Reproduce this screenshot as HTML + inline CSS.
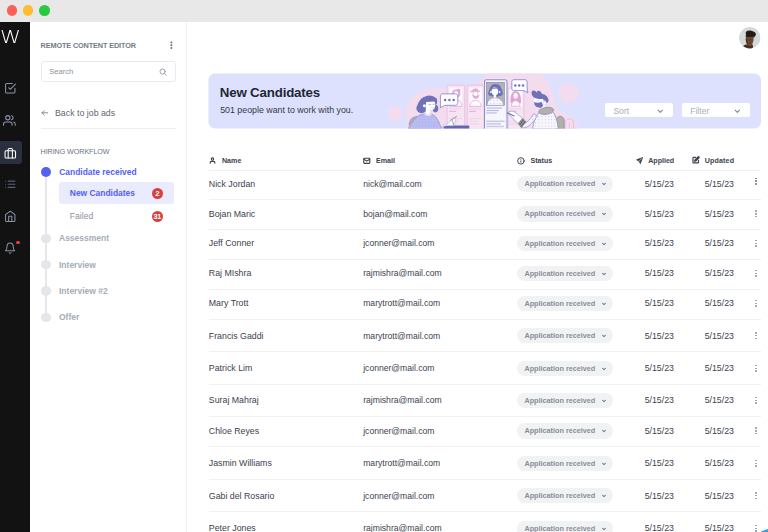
<!DOCTYPE html><html><head><meta charset="utf-8"><title>New Candidates</title><style>
*{box-sizing:border-box}
html,body{margin:0;padding:0}
body{width:768px;height:532px;position:relative;overflow:hidden;background:#fff;font-family:"Liberation Sans",sans-serif;color:#374151}
.a{position:absolute;white-space:nowrap;line-height:1}
.t{position:absolute;white-space:nowrap;line-height:12px;height:12px;margin-top:-6px}
.cell{font-size:8.8px;color:#3b4250}
.em{font-size:8.6px}
.hd{font-size:7.1px;font-weight:700;color:#3b4250}
.pill{position:absolute;left:517px;width:96px;height:15.5px;border-radius:8px;background:#f1f2f4}
.pt{font-size:7.25px;font-weight:700;color:#888e99;left:524.4px}
.ln{position:absolute;left:209px;width:552px;height:1px;background:#f0f1f3}
.step{font-size:8.5px;font-weight:700;color:#a6acb7;left:59px}
.dot{position:absolute;left:41.2px;width:9.6px;height:9.6px;border-radius:50%;background:#e4e6ea}
svg{position:absolute;overflow:visible}
</style></head><body>
<div class="a" style="left:0;top:0;width:768px;height:22.3px;background:#e8e8e8"></div>
<div class="a" style="left:6.699999999999999px;top:5.15px;width:10.7px;height:10.7px;border-radius:50%;background:#fe5f57"></div>
<div class="a" style="left:22.799999999999997px;top:5.15px;width:10.7px;height:10.7px;border-radius:50%;background:#febc2e"></div>
<div class="a" style="left:38.9px;top:5.15px;width:10.7px;height:10.7px;border-radius:50%;background:#28c840"></div>
<div class="a" style="left:0;top:22px;width:30px;height:510px;background:#121212"></div>
<div class="a" style="left:-0.4px;top:26.8px;font-family:'DejaVu Sans',sans-serif;font-weight:200;font-size:18.4px;color:#fff;line-height:20px;transform:scaleX(1.15);transform-origin:0 0">W</div>
<div class="a" style="left:0;top:141px;width:21.6px;height:23px;background:#2a303d;border-radius:0 3px 3px 0"></div>
<svg style="left:3.5500000000000007px;top:82.35px" width="12.5" height="12.5" viewBox="0 0 24 24" fill="none" stroke="#8a93a6" stroke-width="2" stroke-linecap="round" stroke-linejoin="round"><polyline points="9 11 12 14 22 4"/><path d="M21 12v7a2 2 0 0 1-2 2H5a2 2 0 0 1-2-2V5a2 2 0 0 1 2-2h11"/></svg>
<svg style="left:3.1999999999999993px;top:114.1px" width="12.8" height="12.8" viewBox="0 0 24 24" fill="none" stroke="#8a93a6" stroke-width="2" stroke-linecap="round" stroke-linejoin="round"><path d="M17 21v-2a4 4 0 0 0-4-4H5a4 4 0 0 0-4 4v2"/><circle cx="9" cy="7" r="4"/><path d="M23 21v-2a4 4 0 0 0-3-3.87"/><path d="M16 3.13a4 4 0 0 1 0 7.75"/></svg>
<svg style="left:3.8999999999999995px;top:147.0px" width="12.6" height="12.6" viewBox="0 0 24 24" fill="none" stroke="#ffffff" stroke-width="2" stroke-linecap="round" stroke-linejoin="round"><rect x="2" y="7" width="20" height="14" rx="2" ry="2"/><path d="M16 21V5a2 2 0 0 0-2-2h-4a2 2 0 0 0-2 2v16"/></svg>
<svg style="left:3.5500000000000007px;top:178.35px" width="12.5" height="12.5" viewBox="0 0 24 24" fill="none" stroke="#565f70" stroke-width="2" stroke-linecap="round" stroke-linejoin="round"><line x1="8" y1="6" x2="21" y2="6"/><line x1="8" y1="12" x2="21" y2="12"/><line x1="8" y1="18" x2="21" y2="18"/><line x1="3" y1="6" x2="3.01" y2="6"/><line x1="3" y1="12" x2="3.01" y2="12"/><line x1="3" y1="18" x2="3.01" y2="18"/></svg>
<svg style="left:3.5500000000000007px;top:210.35px" width="12.5" height="12.5" viewBox="0 0 24 24" fill="none" stroke="#8a93a6" stroke-width="2" stroke-linecap="round" stroke-linejoin="round"><path d="M3 9l9-7 9 7v11a2 2 0 0 1-2 2H5a2 2 0 0 1-2-2z"/><polyline points="9 22 9 12 15 12 15 22"/></svg>
<svg style="left:3.5px;top:242.20000000000002px" width="12.2" height="12.2" viewBox="0 0 24 24" fill="none" stroke="#8a93a6" stroke-width="2" stroke-linecap="round" stroke-linejoin="round"><path d="M18 8A6 6 0 0 0 6 8c0 7-3 9-3 9h18s-3-2-3-9"/><path d="M13.73 21a2 2 0 0 1-3.46 0"/></svg>
<div class="a" style="left:16.2px;top:240.6px;width:3.4px;height:3.4px;border-radius:50%;background:#ef3b3b"></div>
<div class="a" style="left:30px;top:22px;width:156.5px;height:510px;background:#fff;border-right:1px solid #f1f2f4"></div>
<div class="t" style="left:40.6px;top:46.2px;font-size:7.3px;font-weight:700;color:#747b88;letter-spacing:-0.13px">REMOTE CONTENT EDITOR</div>
<svg style="left:168px;top:40px" width="8" height="12" viewBox="0 0 8 12"><circle cx="3.4" cy="2.6" r="1" fill="#6b7280"/><circle cx="3.4" cy="5.3" r="1" fill="#6b7280"/><circle cx="3.4" cy="8" r="1" fill="#6b7280"/></svg>
<div class="a" style="left:41px;top:61px;width:134.5px;height:21.4px;border:1px solid #e9ebee;border-radius:3px;background:#fff"></div>
<div class="t" style="left:49.2px;top:71.6px;font-size:7.6px;color:#8c929d">Search</div>
<svg style="left:158.8px;top:67.5px" width="8.2" height="8.2" viewBox="0 0 24 24" fill="none" stroke="#9096a1" stroke-width="2.6" stroke-linecap="round" stroke-linejoin="round"><circle cx="10.5" cy="10.5" r="7.5"/><line x1="21" y1="21" x2="16" y2="16"/></svg>
<svg style="left:41.0px;top:108.60000000000001px" width="7.6" height="7.6" viewBox="0 0 24 24" fill="none" stroke="#6b7280" stroke-width="2.6" stroke-linecap="round" stroke-linejoin="round"><line x1="21" y1="12" x2="3" y2="12"/><polyline points="10 5 3 12 10 19"/></svg>
<div class="t" style="left:55px;top:112.9px;font-size:8.8px;color:#5f6672">Back to job ads</div>
<div class="a" style="left:41px;top:128.4px;width:134.5px;height:1px;background:#eceef1"></div>
<div class="t" style="left:40.6px;top:152.1px;font-size:7.2px;color:#6b7280;letter-spacing:-0.09px">HIRING WORKFLOW</div>
<div class="a" style="left:45.4px;top:172px;width:1.3px;height:146px;background:#e5e7eb"></div>
<div class="a" style="left:41px;top:166.6px;width:10px;height:10px;border-radius:50%;background:#5361f2"></div>
<div class="t" style="left:59.2px;top:171.7px;font-size:8.45px;font-weight:700;color:#5361f2">Candidate received</div>
<div class="a" style="left:59.2px;top:182px;width:115px;height:22.2px;border-radius:3px;background:#eaebfd"></div>
<div class="t" style="left:69.8px;top:193.2px;font-size:8.45px;font-weight:700;color:#5361f2">New Candidates</div>
<div class="a" style="left:152px;top:187.6px;width:11px;height:11px;border-radius:50%;background:#d8403d"></div>
<div class="t" style="left:152px;width:11px;text-align:center;top:193.6px;font-size:7.8px;font-weight:700;color:#fff">2</div>
<div class="t" style="left:69.8px;top:216.2px;font-size:8.6px;color:#8c929d">Failed</div>
<div class="a" style="left:152px;top:210.6px;width:11px;height:11px;border-radius:50%;background:#d8403d"></div>
<div class="t" style="left:152px;width:11px;text-align:center;top:216.6px;font-size:7.4px;font-weight:700;color:#fff;letter-spacing:-0.4px;text-indent:-0.4px">31</div>
<div class="dot" style="top:233.5px"></div>
<div class="t step" style="top:238.3px">Assessment</div>
<div class="dot" style="top:259.9px"></div>
<div class="t step" style="top:264.7px">Interview</div>
<div class="dot" style="top:286.2px"></div>
<div class="t step" style="top:291px">Interview #2</div>
<div class="dot" style="top:312.59999999999997px"></div>
<div class="t step" style="top:317.4px">Offer</div>
<svg style="left:739.25px;top:27.05px" width="21.5" height="21.5" viewBox="0 0 43 43"><defs><clipPath id="av"><circle cx="21.5" cy="21.5" r="21.5"/></clipPath><filter id="bl"><feGaussianBlur stdDeviation="0.8"/></filter></defs><g clip-path="url(#av)"><rect width="43" height="43" fill="#d4dadb"/><g filter="url(#bl)"><path d="M2 35 L10 37 L11 44 L2 44 Z" fill="#eceeee"/><path d="M8 39 C11 35 16 34 20 36 L27 35 C29 38 28 42 26 45 L9 45 Z" fill="#452e23"/><path d="M13.6 20 C12.6 27 14.4 34 19 37.6 C23 39.4 27.4 35.4 28.8 28 C29.8 23 29.4 19 28.4 16.6 L15 16 Z" fill="#6d4836"/><path d="M13.8 24 C13.4 30 15.6 35 19 37.6 C17.4 33.6 16.6 29 17 24 Z" fill="#4a3024"/><path d="M19 26.5 L24.5 25.5 M19.5 32 L23 31.6" stroke="#3a261d" stroke-width="1.3" fill="none"/><ellipse cx="23.6" cy="13.6" rx="10.4" ry="6.4" fill="#231b18" transform="rotate(12 23.6 13.6)"/><path d="M13.4 19 C13 14 16 10 21 9.6 L19 21 Z" fill="#231b18"/><path d="M30 17 C31.6 17.6 31.4 21 29.6 22.4 Z" fill="#231b18"/></g></g></svg>
<svg style="left:0;top:0" width="768" height="532" viewBox="0 0 768 532">
<defs>
<clipPath id="bn"><rect x="208.4" y="73.5" width="552.6" height="54.9" rx="6.5"/></clipPath>
<pattern id="dl" width="3" height="3" patternUnits="userSpaceOnUse"><rect width="3" height="3" fill="#b4b8ef"/><circle cx="1" cy="1" r="0.45" fill="#e4e6fb"/></pattern>
<pattern id="dw" width="3.2" height="3.2" patternUnits="userSpaceOnUse"><rect width="3.2" height="3.2" fill="#f7f6fc"/><circle cx="1.2" cy="1.2" r="0.5" fill="#b9badf"/></pattern>
</defs>
<g clip-path="url(#bn)">
<rect x="200" y="70" width="570" height="62" fill="#dee1fd"/>
<!-- pink shapes -->
<circle cx="395.1" cy="113.6" r="7.3" fill="#f3dcee"/>
<ellipse cx="568.6" cy="93.2" rx="10.7" ry="9.7" transform="rotate(35 568.6 93.2)" fill="#f3dcee"/>
<path d="M406.4 129 L406.4 112 C406.6 100 416 90.5 431 88.8 C445 87.6 462 86.4 474.5 84 C480.5 82.4 484.5 77 488 72 L541.5 72 C547 79 551.5 88 553.5 96.8 C555 103 557 108.5 562.3 112.5 C567 115.5 571.7 117 575 121 C577.5 124 578.5 126.5 579 129 Z" fill="#f3dcee"/>
<!-- small pink outline object right -->
<path d="M565 129 L565 123.5 C565 120.5 567 118.8 569.3 118.8 C571.8 118.8 573.6 120.8 573.6 123.5 L573.6 129" fill="#f3dcee" stroke="#e8b4dc" stroke-width="0.8"/>
<path d="M569.3 122.5 L569.3 129" stroke="#e8b4dc" stroke-width="0.6"/>
<!-- cards -->
<g>
<rect x="447.1" y="85.2" width="17.6" height="46" rx="1.6" fill="#f7e4f3" stroke="#ecc8e4" stroke-width="1.2"/>
<rect x="449.5" y="87.7" width="12.8" height="18.4" fill="#fefafd"/>
<ellipse cx="456.2" cy="93.4" rx="4.2" ry="4" fill="#dfaad6"/><circle cx="458.4" cy="91" r="2.2" fill="#dfaad6"/>
<ellipse cx="456" cy="93.6" rx="2.1" ry="2.5" fill="#fefafd"/>
<path d="M450.2 106.4 C450.5 101.5 453 99.6 456 99.6 C459 99.6 461.6 101.5 461.9 106.4 Z" fill="#fefafd" stroke="#dfaad6" stroke-width="0.8"/>
<rect x="449.2" y="108.4" width="12" height="1" fill="#f0cfe8"/><rect x="449.2" y="110.9" width="7" height="0.9" fill="#dfaad6"/><rect x="449.2" y="118.2" width="12.5" height="1" fill="#f0cfe8"/><rect x="449.2" y="120.8" width="9" height="1" fill="#f0cfe8"/>
</g>
<g>
<rect x="467.2" y="85.2" width="16.4" height="46" rx="1.6" fill="#f7e4f3" stroke="#ecc8e4" stroke-width="1.2"/>
<rect x="469.4" y="87.7" width="12.6" height="18.4" fill="#fefafd"/>
<path d="M470 92 L480 91.6 L478.4 90.4 C478 88.2 473 88.2 472.4 90.6 Z" fill="#dfaad6" stroke="#dfaad6" stroke-width="0.6" stroke-linejoin="round"/>
<ellipse cx="475.5" cy="94.8" rx="2.6" ry="3.4" fill="#fefafd" stroke="#dfaad6" stroke-width="0.7"/>
<path d="M472.4 94.4 C472.4 100 479.4 100 479.4 94.4 C478 96.2 474 96.2 472.4 94.4 Z" fill="#dfaad6"/>
<path d="M469.8 106.4 C470 102 472.6 100.4 475.5 100.4 C478.4 100.4 481 102 481.2 106.4 Z" fill="#fefafd" stroke="#dfaad6" stroke-width="0.8"/>
<rect x="469.2" y="108.4" width="11.5" height="1" fill="#f0cfe8"/><rect x="469.2" y="110.9" width="6.5" height="0.9" fill="#dfaad6"/><rect x="469.2" y="118.2" width="12" height="1" fill="#f0cfe8"/><rect x="469.2" y="120.8" width="8.5" height="1" fill="#f0cfe8"/><rect x="469.2" y="123.4" width="10.5" height="1" fill="#f0cfe8"/>
</g>
<g>
<rect x="508.2" y="88" width="15.6" height="43" rx="1.6" fill="#f7e4f3" stroke="#ecc8e4" stroke-width="1.2"/>
<rect x="509.6" y="89.4" width="12.8" height="16.8" fill="#fefafd"/>
<path d="M510.4 103 C510.2 96 511.4 91.2 515.6 91.2 C520 91.2 521.2 96 521 103 C519 103.6 512.4 103.6 510.4 103 Z" fill="#e3a2d2"/>
<ellipse cx="515.6" cy="95.8" rx="2.2" ry="2.9" fill="#fefafd"/>
<path d="M511.4 106.2 C511.6 102.4 513.6 100.8 515.6 100.8 C517.8 100.8 519.8 102.4 520 106.2 Z" fill="#fefafd" stroke="#e3a2d2" stroke-width="0.7"/>
<rect x="509.4" y="108.4" width="12" height="1" fill="#f0cfe8"/><rect x="509.4" y="110.9" width="7" height="0.9" fill="#dfaad6"/><rect x="509.4" y="120.8" width="11" height="1" fill="#f0cfe8"/><rect x="509.4" y="123.4" width="8" height="1" fill="#f0cfe8"/>
</g>
<!-- centre card -->
<g>
<rect x="483.4" y="78.6" width="24.7" height="54" rx="2.6" fill="#e9e9fb"/>
<rect x="484.5" y="79.7" width="22.5" height="54" rx="2" fill="#f7f6fd" stroke="#8d8fca" stroke-width="1.1"/>
<rect x="486.4" y="82.3" width="17.9" height="23.1" fill="#b4b2ae" stroke="#7a7cc0" stroke-width="0.6"/>
<path d="M488.6 95 C487.4 92.6 489.2 90.6 489.8 88.4 C490.6 85.4 492.6 84 495.4 84 C498.4 84 500.6 85.4 501.4 88.4 C502 90.6 503.6 92.6 502.4 95 C500.8 97.2 490.2 97.2 488.6 95 Z" fill="#6f72b9"/>
<ellipse cx="494.9" cy="91.2" rx="3.3" ry="3.9" fill="#fbfbff"/>
<path d="M491.2 89.6 C492.6 87 497.4 86.6 499 89.2 C497 88.2 493.6 88.4 491.2 89.6 Z" fill="#6f72b9"/>
<circle cx="490.9" cy="92" r="0.9" fill="#fbfbff"/><circle cx="499.6" cy="92" r="0.9" fill="#fbfbff"/>
<rect x="493.6" y="94.4" width="2.6" height="4" fill="#fbfbff"/>
<path d="M487 105.4 C487.2 100.2 490.4 97.9 495 97.9 C499.8 97.9 503.2 100.2 503.4 105.4 Z" fill="url(#dw)" stroke="#8d8fca" stroke-width="0.5"/>
<rect x="486.3" y="107.3" width="15.8" height="1.6" fill="#c9cae9"/>
<rect x="486.3" y="110.2" width="12.6" height="0.9" fill="#a5a7d6"/>
<rect x="486.3" y="112.1" width="10.6" height="1.6" fill="#c9cae9"/>
<rect x="486.3" y="120.5" width="18.4" height="1.6" fill="#c9cae9"/>
<rect x="486.3" y="123.1" width="14.6" height="1.5" fill="#c9cae9"/>
<rect x="486.3" y="125.7" width="17.6" height="1.5" fill="#c9cae9"/>
</g>
<!-- woman -->
<g>
<path d="M409.2 125 C409.2 120.4 412 116.6 417 116.6 L419 124 Z" fill="#b3b1a6" stroke="#8d8fca" stroke-width="0.7"/>
<path d="M408.4 129 C409 126 410.4 123.6 412.6 121.4 C414.6 118.8 416.8 116.2 419.8 115 L424.6 114 L431.6 114.2 C436 115.6 438.6 120.4 441 127.4 L441.4 129 Z" fill="url(#dl)" stroke="#7f82c6" stroke-width="0.6"/>
<ellipse cx="429.4" cy="101.6" rx="7.9" ry="6" fill="#6f72b9"/>
<ellipse cx="421.6" cy="108.2" rx="5.2" ry="5" fill="#6f72b9"/><path d="M417.4 105 C419 101 421 98.6 424 97 L428 104 L424 110 Z" fill="#6f72b9"/>
<ellipse cx="435.4" cy="108.6" rx="2.9" ry="3.8" fill="#6f72b9"/>
<rect x="425.8" y="107" width="4" height="7.6" fill="#fdfdff"/>
<path d="M424.4 114.2 C426.6 115.6 429.8 115.6 431.8 114.3" fill="none" stroke="#fdfdff" stroke-width="0.9"/>
<path d="M426 102 L434.6 101.6 C435.8 104 435.6 107.6 433.8 109.2 C431.8 110.6 428.6 110.4 426 108.6 Z" fill="#fdfdff"/>
<circle cx="424.4" cy="105.7" r="1.5" fill="#fdfdff"/>
<path d="M422.4 103.4 C424 100.4 431.6 99.8 436.6 101.8 L436.6 98 L422 98 Z" fill="#6f72b9"/>
<path d="M428.4 104.6 L431.2 104.5 M432.4 104.4 L434.8 104.2" stroke="#c9c4b0" stroke-width="1" fill="none"/>
<path d="M431.6 107.6 C432.2 108.2 433 108.2 433.6 107.6" stroke="#8d8fca" stroke-width="0.4" fill="none"/>
</g>
<!-- tablet + woman's hand -->
<rect x="443.5" y="125.6" width="25.8" height="4" rx="0.8" fill="#6467b0"/>
<path d="M441 127.6 C443 125 445.4 124 447.6 124 L452 118.8 C453 117.4 455 117.2 455.6 118.6 L454.6 125.6 L446 125.8 Z" fill="#fdfdff" stroke="#8d8fca" stroke-width="0.4"/>
<path d="M450.6 120.6 L456.4 116.4" stroke="#a9a9b8" stroke-width="1.2" stroke-linecap="round"/>
<path d="M452.4 120.4 L453.8 125.4" stroke="#8d8fca" stroke-width="0.9"/>
<!-- bubble 1 -->
<path d="M442.4 93.9 L455.8 93.9 C457 93.9 457.8 94.8 457.8 95.9 L457.8 103.3 C457.8 104.4 457 105.3 455.8 105.3 L444.8 105.3 L440.4 107.7 L440.4 95.9 C440.4 94.8 441.2 93.9 442.4 93.9 Z" fill="#fdfdff" stroke="#7f82c6" stroke-width="0.8" stroke-linejoin="round"/>
<circle cx="445.1" cy="99.9" r="1.25" fill="#6f72b9"/><circle cx="449.4" cy="99.9" r="1.25" fill="#6f72b9"/><circle cx="453.7" cy="99.9" r="1.25" fill="#6f72b9"/>
<!-- bubble 2 -->
<path d="M513.8 79.7 L525.1 79.7 C526.3 79.7 527.1 80.6 527.1 81.7 L527.1 88 L527.8 92.8 L524 90.6 L513.8 90.6 C512.6 90.6 511.8 89.7 511.8 88.6 L511.8 81.7 C511.8 80.6 512.6 79.7 513.8 79.7 Z" fill="#fdfdff" stroke="#7f82c6" stroke-width="0.8" stroke-linejoin="round"/>
<circle cx="515.3" cy="85.5" r="1.2" fill="#6f72b9"/><circle cx="519.2" cy="85.5" r="1.2" fill="#6f72b9"/><circle cx="523.1" cy="85.5" r="1.2" fill="#6f72b9"/>
<!-- man -->
<g>
<path d="M556.2 129 L556.2 121 C556.2 118 558 116.2 560.2 116.2 C562.4 116.2 564.2 118 564.2 121 L564.2 129 Z" fill="#b3b1a6" stroke="#7f82c6" stroke-width="0.7"/>
<path d="M532.6 129 C533.4 123 535 117.6 537.6 114.4 L541 110.4 L551 110.2 C555 113 557.4 120 558.2 129 Z" fill="url(#dw)" stroke="#7f82c6" stroke-width="0.7"/>
<rect x="540.8" y="105.6" width="3.4" height="5" fill="#fdfdff"/>
<path d="M534.4 98.6 L545 98.4 L545.6 106.4 L541.6 107.4 L536 106.6 L534.2 103 Z" fill="#fdfdff"/>
<path d="M534 102 C536 103 539.4 102.8 541.6 101.8 L543 105.4 C542.8 107.2 540.8 107.9 538.6 107.6 C535.8 107.2 534.2 105.4 534 102 Z" fill="#6f72b9"/>
<path d="M533.4 97 C530.8 94.4 531 90.6 533.6 90.6 C535.2 90.6 536.4 91.8 536.9 93.2 C536.6 91.2 537.6 90.4 538.9 90.8 C540.6 91.4 541.6 92.8 542 94 C545.4 94.2 548 96.8 548.5 99.8 C548.8 101.6 548 103 546.4 102.6 L545.4 100.6 L543.6 100.8 L543 98.8 C540 99.4 536 98.8 533.4 97 Z" fill="#6f72b9"/>
<circle cx="544.8" cy="103.4" r="1.7" fill="#fdfdff" stroke="#8d8fca" stroke-width="0.3"/>
<path d="M536.4 101 L539.4 100.6" stroke="#d7d8f0" stroke-width="0.9"/>
<ellipse cx="546.2" cy="110.9" rx="7.5" ry="3.5" transform="rotate(-8 546.2 110.9)" fill="#b3b1a6" stroke="#7f82c6" stroke-width="0.7"/>
<!-- arm -->
<path d="M537.4 116 C534 121 530 126 525.4 127.6 L521 128 L523.8 124 C528 122 531 118.4 533.6 113.8 Z" fill="url(#dw)" stroke="#7f82c6" stroke-width="0.6"/>
<path d="M508.4 112.2 C511 110.6 513.4 110.8 515.6 112.6 L522.6 118.6 L518.4 124 L512.4 118 L509.6 115 Z" fill="#fdfdff" stroke="#7f82c6" stroke-width="0.6" stroke-linejoin="round"/>
<path d="M517.8 123.6 L522.4 118 L526.4 122 L521.4 128 Z" fill="#8b8b92"/>
<path d="M519.4 125.2 L523.8 119.4 M521 126.8 L525.4 121" stroke="#55565e" stroke-width="0.7"/>
<path d="M507.4 112.9 L514.2 116" stroke="#6f72b9" stroke-width="1.1" stroke-linecap="round"/>
</g>
</g>
</svg>

<div class="t" style="left:219.8px;top:92.5px;font-size:13.3px;letter-spacing:-0.18px;font-weight:700;color:#1f2735;line-height:16px;height:16px;margin-top:-8px">New Candidates</div>
<div class="t" style="left:220.2px;top:109.6px;font-size:8.83px;color:#333a47">501 people want to work with you.</div>
<div class="a" style="left:605.2px;top:103.2px;width:67.8px;height:14px;border-radius:2px;background:#fff"></div>
<div class="t" style="left:613.4000000000001px;top:110.6px;font-size:8.6px;color:#a9aeb8">Sort</div>
<svg style="left:657.2px;top:107.60000000000001px" width="6.6" height="6.6" viewBox="0 0 24 24" fill="none" stroke="#868c97" stroke-width="4.2" stroke-linecap="round" stroke-linejoin="round"><polyline points="4 8 12 16 20 8"/></svg>
<div class="a" style="left:682px;top:103.2px;width:67.8px;height:14px;border-radius:2px;background:#fff"></div>
<div class="t" style="left:690.2px;top:110.6px;font-size:8.6px;color:#a9aeb8">Filter</div>
<svg style="left:734.0px;top:107.60000000000001px" width="6.6" height="6.6" viewBox="0 0 24 24" fill="none" stroke="#868c97" stroke-width="4.2" stroke-linecap="round" stroke-linejoin="round"><polyline points="4 8 12 16 20 8"/></svg>
<svg style="left:209.0px;top:157.0px" width="7.0" height="7.0" viewBox="0 0 24 24" fill="none" stroke="#3b4250" stroke-width="3.8" stroke-linecap="round" stroke-linejoin="round"><path d="M20 21v-2a4 4 0 0 0-4-4H8a4 4 0 0 0-4 4v2"/><circle cx="12" cy="7" r="4"/></svg>
<div class="t hd" style="left:222px;top:161.1px">Name</div>
<svg style="left:362.8px;top:156.6px" width="7.6" height="7.6" viewBox="0 0 24 24" fill="none" stroke="#3b4250" stroke-width="3.6" stroke-linecap="round" stroke-linejoin="round"><rect x="2.5" y="4" width="19" height="16" rx="2.5"/><polyline points="3 7 12 13 21 7"/></svg>
<div class="t hd" style="left:376px;top:161.1px">Email</div>
<svg style="left:516.9px;top:156.5px" width="7.8" height="7.8" viewBox="0 0 24 24" fill="none" stroke="#3b4250" stroke-width="3" stroke-linecap="round" stroke-linejoin="round"><circle cx="12" cy="12" r="10"/><line x1="12" y1="16" x2="12" y2="12"/><line x1="12" y1="8" x2="12.01" y2="8"/></svg>
<div class="t hd" style="left:530.5px;top:161.1px">Status</div>
<svg style="left:635.6px;top:156.8px" width="7.2" height="7.2" viewBox="0 0 24 24"><path d="M22 2 L2 9.5 L10.5 13.5 L14.5 22 Z" fill="#3b4250" stroke="#3b4250" stroke-width="3" stroke-linejoin="round"/><path d="M10.5 13.5 L21 3" stroke="#fff" stroke-width="1.8"/></svg>
<div class="t hd" style="left:648.2px;top:161.1px">Applied</div>
<svg style="left:691.6px;top:156.4px" width="7.8" height="7.8" viewBox="0 0 24 24" fill="none" stroke="#3b4250" stroke-width="3.6" stroke-linecap="round" stroke-linejoin="round"><path d="M11 4H5a2 2 0 0 0-2 2v13a2 2 0 0 0 2 2h13a2 2 0 0 0 2-2v-6"/><path d="M18.5 2.5a2.12 2.12 0 0 1 3 3L12 15l-4 1 1-4 9.500-9.500z" fill="#3b4250"/></svg>
<div class="t hd" style="left:704.7px;top:161.1px;letter-spacing:0.16px">Updated</div>
<div class="ln" style="top:170.0px"></div>
<div class="ln" style="top:199.25px"></div>
<div class="ln" style="top:229.25px"></div>
<div class="ln" style="top:259.25px"></div>
<div class="ln" style="top:288.75px"></div>
<div class="ln" style="top:318.5px"></div>
<div class="ln" style="top:351.0px"></div>
<div class="ln" style="top:383.5px"></div>
<div class="ln" style="top:416.0px"></div>
<div class="ln" style="top:446.0px"></div>
<div class="ln" style="top:478.5px"></div>
<div class="ln" style="top:511.0px"></div>
<div class="t cell" style="left:208.8px;top:183.8px">Nick Jordan</div>
<div class="t cell em" style="left:363.2px;top:183.8px">nick@mail.com</div>
<div class="pill" style="top:176.05px"></div>
<div class="t pt" style="top:184.0px">Application received</div>
<svg style="left:601.9px;top:182.4px" width="4.0" height="4.0" viewBox="0 0 24 24" fill="none" stroke="#7a808b" stroke-width="7" stroke-linecap="round" stroke-linejoin="round"><polyline points="4 8 12 16 20 8"/></svg>
<div class="t cell" style="left:614px;width:60px;text-align:right;top:183.8px">5/15/23</div>
<div class="t cell" style="left:674px;width:60px;text-align:right;top:183.8px">5/15/23</div>
<div class="a" style="left:755.1px;top:177.5px;width:1.8px;height:1.8px;border-radius:50%;background:#6f7581"></div>
<div class="a" style="left:755.1px;top:180.2px;width:1.8px;height:1.8px;border-radius:50%;background:#6f7581"></div>
<div class="a" style="left:755.1px;top:182.89999999999998px;width:1.8px;height:1.8px;border-radius:50%;background:#6f7581"></div>
<div class="t cell" style="left:208.8px;top:213.8px">Bojan Maric</div>
<div class="t cell em" style="left:363.2px;top:213.8px">bojan@mail.com</div>
<div class="pill" style="top:206.05px"></div>
<div class="t pt" style="top:214.0px">Application received</div>
<svg style="left:601.9px;top:212.4px" width="4.0" height="4.0" viewBox="0 0 24 24" fill="none" stroke="#7a808b" stroke-width="7" stroke-linecap="round" stroke-linejoin="round"><polyline points="4 8 12 16 20 8"/></svg>
<div class="t cell" style="left:614px;width:60px;text-align:right;top:213.8px">5/15/23</div>
<div class="t cell" style="left:674px;width:60px;text-align:right;top:213.8px">5/15/23</div>
<div class="a" style="left:755.25px;top:210.35000000000002px;width:1.5px;height:1.5px;border-radius:50%;background:#949aa5"></div>
<div class="a" style="left:755.25px;top:213.05px;width:1.5px;height:1.5px;border-radius:50%;background:#949aa5"></div>
<div class="a" style="left:755.25px;top:215.75px;width:1.5px;height:1.5px;border-radius:50%;background:#949aa5"></div>
<div class="t cell" style="left:208.8px;top:243.3px">Jeff Conner</div>
<div class="t cell em" style="left:363.2px;top:243.3px">jconner@mail.com</div>
<div class="pill" style="top:235.55px"></div>
<div class="t pt" style="top:243.5px">Application received</div>
<svg style="left:601.9px;top:241.9px" width="4.0" height="4.0" viewBox="0 0 24 24" fill="none" stroke="#7a808b" stroke-width="7" stroke-linecap="round" stroke-linejoin="round"><polyline points="4 8 12 16 20 8"/></svg>
<div class="t cell" style="left:614px;width:60px;text-align:right;top:243.3px">5/15/23</div>
<div class="t cell" style="left:674px;width:60px;text-align:right;top:243.3px">5/15/23</div>
<div class="a" style="left:755.25px;top:239.85000000000002px;width:1.5px;height:1.5px;border-radius:50%;background:#949aa5"></div>
<div class="a" style="left:755.25px;top:242.55px;width:1.5px;height:1.5px;border-radius:50%;background:#949aa5"></div>
<div class="a" style="left:755.25px;top:245.25px;width:1.5px;height:1.5px;border-radius:50%;background:#949aa5"></div>
<div class="t cell" style="left:208.8px;top:273.3px">Raj MIshra</div>
<div class="t cell em" style="left:363.2px;top:273.3px">rajmishra@mail.com</div>
<div class="pill" style="top:265.55px"></div>
<div class="t pt" style="top:273.5px">Application received</div>
<svg style="left:601.9px;top:271.9px" width="4.0" height="4.0" viewBox="0 0 24 24" fill="none" stroke="#7a808b" stroke-width="7" stroke-linecap="round" stroke-linejoin="round"><polyline points="4 8 12 16 20 8"/></svg>
<div class="t cell" style="left:614px;width:60px;text-align:right;top:273.3px">5/15/23</div>
<div class="t cell" style="left:674px;width:60px;text-align:right;top:273.3px">5/15/23</div>
<div class="a" style="left:755.25px;top:269.85px;width:1.5px;height:1.5px;border-radius:50%;background:#949aa5"></div>
<div class="a" style="left:755.25px;top:272.55px;width:1.5px;height:1.5px;border-radius:50%;background:#949aa5"></div>
<div class="a" style="left:755.25px;top:275.25px;width:1.5px;height:1.5px;border-radius:50%;background:#949aa5"></div>
<div class="t cell" style="left:208.8px;top:303.3px">Mary Trott</div>
<div class="t cell em" style="left:363.2px;top:303.3px">marytrott@mail.com</div>
<div class="pill" style="top:295.55px"></div>
<div class="t pt" style="top:303.5px">Application received</div>
<svg style="left:601.9px;top:301.9px" width="4.0" height="4.0" viewBox="0 0 24 24" fill="none" stroke="#7a808b" stroke-width="7" stroke-linecap="round" stroke-linejoin="round"><polyline points="4 8 12 16 20 8"/></svg>
<div class="t cell" style="left:614px;width:60px;text-align:right;top:303.3px">5/15/23</div>
<div class="t cell" style="left:674px;width:60px;text-align:right;top:303.3px">5/15/23</div>
<div class="a" style="left:755.25px;top:299.85px;width:1.5px;height:1.5px;border-radius:50%;background:#949aa5"></div>
<div class="a" style="left:755.25px;top:302.55px;width:1.5px;height:1.5px;border-radius:50%;background:#949aa5"></div>
<div class="a" style="left:755.25px;top:305.25px;width:1.5px;height:1.5px;border-radius:50%;background:#949aa5"></div>
<div class="t cell" style="left:208.8px;top:335.55px">Francis Gaddi</div>
<div class="t cell em" style="left:363.2px;top:335.55px">marytrott@mail.com</div>
<div class="pill" style="top:327.8px"></div>
<div class="t pt" style="top:335.75px">Application received</div>
<svg style="left:601.9px;top:334.15px" width="4.0" height="4.0" viewBox="0 0 24 24" fill="none" stroke="#7a808b" stroke-width="7" stroke-linecap="round" stroke-linejoin="round"><polyline points="4 8 12 16 20 8"/></svg>
<div class="t cell" style="left:614px;width:60px;text-align:right;top:335.55px">5/15/23</div>
<div class="t cell" style="left:674px;width:60px;text-align:right;top:335.55px">5/15/23</div>
<div class="a" style="left:755.25px;top:332.1px;width:1.5px;height:1.5px;border-radius:50%;background:#949aa5"></div>
<div class="a" style="left:755.25px;top:334.8px;width:1.5px;height:1.5px;border-radius:50%;background:#949aa5"></div>
<div class="a" style="left:755.25px;top:337.5px;width:1.5px;height:1.5px;border-radius:50%;background:#949aa5"></div>
<div class="t cell" style="left:208.8px;top:368.3px">Patrick Lim</div>
<div class="t cell em" style="left:363.2px;top:368.3px">jconner@mail.com</div>
<div class="pill" style="top:360.55px"></div>
<div class="t pt" style="top:368.5px">Application received</div>
<svg style="left:601.9px;top:366.9px" width="4.0" height="4.0" viewBox="0 0 24 24" fill="none" stroke="#7a808b" stroke-width="7" stroke-linecap="round" stroke-linejoin="round"><polyline points="4 8 12 16 20 8"/></svg>
<div class="t cell" style="left:614px;width:60px;text-align:right;top:368.3px">5/15/23</div>
<div class="t cell" style="left:674px;width:60px;text-align:right;top:368.3px">5/15/23</div>
<div class="a" style="left:755.25px;top:364.85px;width:1.5px;height:1.5px;border-radius:50%;background:#949aa5"></div>
<div class="a" style="left:755.25px;top:367.55px;width:1.5px;height:1.5px;border-radius:50%;background:#949aa5"></div>
<div class="a" style="left:755.25px;top:370.25px;width:1.5px;height:1.5px;border-radius:50%;background:#949aa5"></div>
<div class="t cell" style="left:208.8px;top:400.3px">Suraj Mahraj</div>
<div class="t cell em" style="left:363.2px;top:400.3px">rajmishra@mail.com</div>
<div class="pill" style="top:392.55px"></div>
<div class="t pt" style="top:400.5px">Application received</div>
<svg style="left:601.9px;top:398.9px" width="4.0" height="4.0" viewBox="0 0 24 24" fill="none" stroke="#7a808b" stroke-width="7" stroke-linecap="round" stroke-linejoin="round"><polyline points="4 8 12 16 20 8"/></svg>
<div class="t cell" style="left:614px;width:60px;text-align:right;top:400.3px">5/15/23</div>
<div class="t cell" style="left:674px;width:60px;text-align:right;top:400.3px">5/15/23</div>
<div class="a" style="left:755.25px;top:396.85px;width:1.5px;height:1.5px;border-radius:50%;background:#949aa5"></div>
<div class="a" style="left:755.25px;top:399.55px;width:1.5px;height:1.5px;border-radius:50%;background:#949aa5"></div>
<div class="a" style="left:755.25px;top:402.25px;width:1.5px;height:1.5px;border-radius:50%;background:#949aa5"></div>
<div class="t cell" style="left:208.8px;top:430.8px">Chloe Reyes</div>
<div class="t cell em" style="left:363.2px;top:430.8px">jconner@mail.com</div>
<div class="pill" style="top:423.05px"></div>
<div class="t pt" style="top:431.0px">Application received</div>
<svg style="left:601.9px;top:429.4px" width="4.0" height="4.0" viewBox="0 0 24 24" fill="none" stroke="#7a808b" stroke-width="7" stroke-linecap="round" stroke-linejoin="round"><polyline points="4 8 12 16 20 8"/></svg>
<div class="t cell" style="left:614px;width:60px;text-align:right;top:430.8px">5/15/23</div>
<div class="t cell" style="left:674px;width:60px;text-align:right;top:430.8px">5/15/23</div>
<div class="a" style="left:755.25px;top:427.35px;width:1.5px;height:1.5px;border-radius:50%;background:#949aa5"></div>
<div class="a" style="left:755.25px;top:430.05px;width:1.5px;height:1.5px;border-radius:50%;background:#949aa5"></div>
<div class="a" style="left:755.25px;top:432.75px;width:1.5px;height:1.5px;border-radius:50%;background:#949aa5"></div>
<div class="t cell" style="left:208.8px;top:463.3px">Jasmin Williams</div>
<div class="t cell em" style="left:363.2px;top:463.3px">marytrott@mail.com</div>
<div class="pill" style="top:455.55px"></div>
<div class="t pt" style="top:463.5px">Application received</div>
<svg style="left:601.9px;top:461.9px" width="4.0" height="4.0" viewBox="0 0 24 24" fill="none" stroke="#7a808b" stroke-width="7" stroke-linecap="round" stroke-linejoin="round"><polyline points="4 8 12 16 20 8"/></svg>
<div class="t cell" style="left:614px;width:60px;text-align:right;top:463.3px">5/15/23</div>
<div class="t cell" style="left:674px;width:60px;text-align:right;top:463.3px">5/15/23</div>
<div class="a" style="left:755.25px;top:459.85px;width:1.5px;height:1.5px;border-radius:50%;background:#949aa5"></div>
<div class="a" style="left:755.25px;top:462.55px;width:1.5px;height:1.5px;border-radius:50%;background:#949aa5"></div>
<div class="a" style="left:755.25px;top:465.25px;width:1.5px;height:1.5px;border-radius:50%;background:#949aa5"></div>
<div class="t cell" style="left:208.8px;top:495.55px">Gabi del Rosario</div>
<div class="t cell em" style="left:363.2px;top:495.55px">jconner@mail.com</div>
<div class="pill" style="top:487.8px"></div>
<div class="t pt" style="top:495.75px">Application received</div>
<svg style="left:601.9px;top:494.15px" width="4.0" height="4.0" viewBox="0 0 24 24" fill="none" stroke="#7a808b" stroke-width="7" stroke-linecap="round" stroke-linejoin="round"><polyline points="4 8 12 16 20 8"/></svg>
<div class="t cell" style="left:614px;width:60px;text-align:right;top:495.55px">5/15/23</div>
<div class="t cell" style="left:674px;width:60px;text-align:right;top:495.55px">5/15/23</div>
<div class="a" style="left:755.25px;top:492.1px;width:1.5px;height:1.5px;border-radius:50%;background:#949aa5"></div>
<div class="a" style="left:755.25px;top:494.8px;width:1.5px;height:1.5px;border-radius:50%;background:#949aa5"></div>
<div class="a" style="left:755.25px;top:497.5px;width:1.5px;height:1.5px;border-radius:50%;background:#949aa5"></div>
<div class="t cell" style="left:208.8px;top:528.3px">Peter Jones</div>
<div class="t cell em" style="left:363.2px;top:528.3px">rajmishra@mail.com</div>
<div class="pill" style="top:520.55px"></div>
<div class="t pt" style="top:528.5px">Application received</div>
<svg style="left:601.9px;top:526.9px" width="4.0" height="4.0" viewBox="0 0 24 24" fill="none" stroke="#7a808b" stroke-width="7" stroke-linecap="round" stroke-linejoin="round"><polyline points="4 8 12 16 20 8"/></svg>
<div class="t cell" style="left:614px;width:60px;text-align:right;top:528.3px">5/15/23</div>
<div class="t cell" style="left:674px;width:60px;text-align:right;top:528.3px">5/15/23</div>
<div class="a" style="left:755.25px;top:524.8499999999999px;width:1.5px;height:1.5px;border-radius:50%;background:#949aa5"></div>
<div class="a" style="left:755.25px;top:527.55px;width:1.5px;height:1.5px;border-radius:50%;background:#949aa5"></div>
<div class="a" style="left:755.25px;top:530.25px;width:1.5px;height:1.5px;border-radius:50%;background:#949aa5"></div>
<svg style="left:748px;top:512px" width="20" height="20" viewBox="0 0 20 20"><path d="M20 17 C17.2 17.6 14.4 18.8 12.4 20 L20 20 Z" fill="#2f9df4"/></svg>
</body></html>
